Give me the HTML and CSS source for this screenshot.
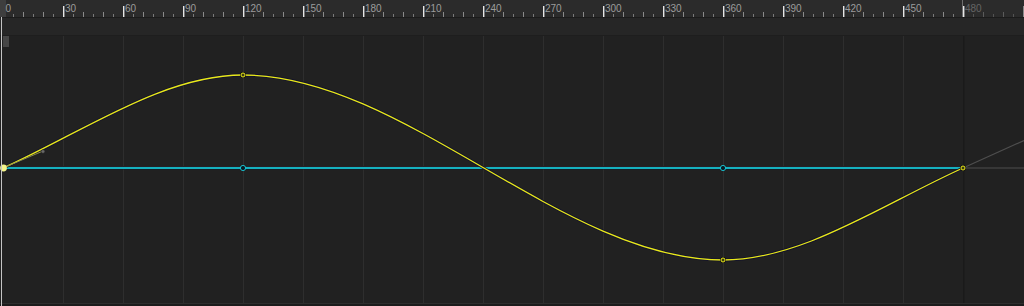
FILE: index.html
```html
<!DOCTYPE html>
<html>
<head>
<meta charset="utf-8">
<link rel="stylesheet" href="styles.css">
</head>
<body>
<div class="editor">
  <div class="ruler">
    <svg class="ruler-svg" width="1024" height="17" viewBox="0 0 1024 17">
      <defs>
        <pattern id="minor" patternUnits="userSpaceOnUse" x="3" y="0" width="20" height="17">
          <rect x="0" y="12" width="1" height="5" fill="#8a8a8a"/>
          <rect x="10" y="14" width="1" height="3" fill="#7a7a7a"/>
        </pattern>
        <pattern id="major" patternUnits="userSpaceOnUse" x="3" y="0" width="60" height="17">
          <rect x="0" y="6" width="1.4" height="11" fill="#e6e6e6"/>
        </pattern>
      </defs>
      <rect x="0" y="0" width="1024" height="17" fill="url(#minor)"/>
      <rect x="0" y="0" width="1024" height="17" fill="url(#major)"/>
      <rect x="0" y="0" width="6" height="17" fill="#3e3e3e"/>
      <g class="labels">
        <text x="5.5" y="12">0</text>
        <text x="65" y="12">30</text>
        <text x="125" y="12">60</text>
        <text x="185" y="12">90</text>
        <text x="245" y="12">120</text>
        <text x="305" y="12">150</text>
        <text x="365" y="12">180</text>
        <text x="425" y="12">210</text>
        <text x="485" y="12">240</text>
        <text x="545" y="12">270</text>
        <text x="605" y="12">300</text>
        <text x="665" y="12">330</text>
        <text x="725" y="12">360</text>
        <text x="785" y="12">390</text>
        <text x="845" y="12">420</text>
        <text x="905" y="12">450</text>
        <text x="965" y="12">480</text>
      </g>
      <rect x="965" y="0" width="59" height="17" fill="#2b2b2b" fill-opacity="0.5"/>
      <rect x="962" y="0" width="1" height="17" fill="#6e6e6e"/>
    </svg>
  </div>
  <div class="band"></div>
  <div class="canvas">
    <svg class="curve-svg" width="1024" height="267" viewBox="0 0 1024 267">
      <defs>
        <pattern id="grid" patternUnits="userSpaceOnUse" x="3" y="0" width="60" height="267">
          <rect x="0" y="0" width="1" height="267" fill="#2e2e2e"/>
        </pattern>
      </defs>
      <rect x="60" y="0" width="902" height="267" fill="url(#grid)"/>
      <rect x="963" y="0" width="1.5" height="267" fill="#1a1a1a"/>
      <rect x="3" y="0" width="6" height="11" fill="#464646"/>
      <line x1="3" y1="130.5" x2="963" y2="130.5" stroke="#3a2626" stroke-width="1"/>
      <!-- extrapolation -->
      <line x1="963" y1="132" x2="1024" y2="132" stroke="#4e4e4e" stroke-width="1.2"/>
      <line x1="963" y1="132" x2="1024" y2="104.5" stroke="#4e4e4e" stroke-width="1.2"/>
      <!-- cyan curve -->
      <line x1="3" y1="132" x2="963" y2="132" stroke="#0c1f2a" stroke-width="3"/>
      <line x1="3" y1="132" x2="963" y2="132" stroke="#19e3f2" stroke-width="1.5"/>
      <!-- yellow curve -->
      <path d="M3,132 C83,96 163,39 243,39 C403,39 563,224 723,224 C803,224 883,168 963,132" fill="none" stroke="#14142a" stroke-width="3"/>
      <path d="M3,132 C83,96 163,39 243,39 C403,39 563,224 723,224 C803,224 883,168 963,132" fill="none" stroke="#e9e91a" stroke-width="1.3"/>
      <!-- tangent handle -->
      <line x1="3" y1="132" x2="43" y2="115" stroke="#8a8a4a" stroke-width="1"/>
      <circle cx="43" cy="115.5" r="1.8" fill="#6a6a6a" stroke="#2a2a2a" stroke-width="0.6"/>
      <!-- cyan keys -->
      <circle cx="243" cy="132" r="2.6" fill="#0a1a22" stroke="#19e3f2" stroke-width="0.8"/>
      <circle cx="723" cy="132" r="2.6" fill="#0a1a22" stroke="#19e3f2" stroke-width="0.8"/>
      <!-- yellow keys -->
      <circle cx="243" cy="39" r="3" fill="#111"/>
      <circle cx="243" cy="39" r="2" fill="#3a3a10" stroke="#e9e91a" stroke-width="1"/>
      <circle cx="723" cy="224" r="3" fill="#111"/>
      <circle cx="723" cy="224" r="2" fill="#3a3a10" stroke="#e9e91a" stroke-width="1"/>
      <circle cx="963" cy="132" r="3" fill="#111"/>
      <circle cx="963" cy="132" r="2" fill="#3a3a10" stroke="#e9e91a" stroke-width="1"/>
      <circle cx="3.5" cy="132" r="3.4" fill="#f4f48a"/>
    </svg>
  </div>
  <div class="footer"></div>
  <div class="cursor"></div>
</div>
</body>
</html>
```
FILE: styles.css
```css
html, body {
  margin: 0;
  padding: 0;
  background: #222222;
  overflow: hidden;
}
.editor {
  position: relative;
  width: 1024px;
  height: 306px;
  display: flex;
  flex-direction: column;
  font-family: "Liberation Sans", Arial, sans-serif;
}
.ruler {
  height: 17px;
  background: #2b2b2b;
  border-bottom: 1px solid #1b1b1b;
}
.ruler-svg, .curve-svg {
  display: block;
}
.labels text {
  font-family: "Liberation Sans", Arial, sans-serif;
  font-size: 10px;
  fill: #9c9c9c;
}
.band {
  height: 17px;
  background: #262626;
  border-bottom: 1px solid #1e1e1e;
}
.canvas {
  height: 267px;
  background: #212121;
}
.footer {
  height: 2px;
  border-top: 1px solid #2d2d2d;
  background: #1c1c1c;
}
.cursor {
  position: absolute;
  left: 1px;
  top: 17px;
  bottom: 0;
  width: 1px;
  background: #c4c4c4;
}
```
